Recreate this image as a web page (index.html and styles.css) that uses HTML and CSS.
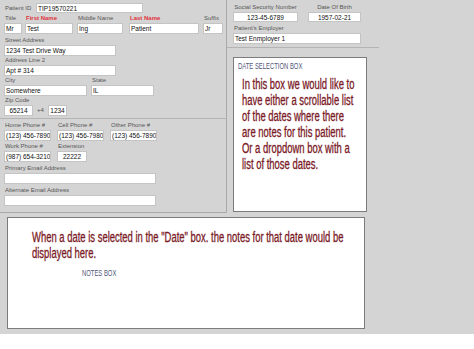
FILE: index.html
```html
<!DOCTYPE html>
<html>
<head>
<meta charset="utf-8">
<link rel="stylesheet" href="styles.css">
</head>
<body>
<div class="screen">
  <div class="top">
    <div class="left">
      <div class="row r1">
        <span class="lbl-inline">Patient ID</span>
        <div class="box w-pid">TIP19570221</div>
      </div>
      <div class="row r2">
        <div class="field f-title"><div class="lbl">Title</div><div class="box">Mr</div></div>
        <div class="field f-first"><div class="lbl req">First Name</div><div class="box">Test</div></div>
        <div class="field f-middle"><div class="lbl">Middle Name</div><div class="box">Ing</div></div>
        <div class="field f-last"><div class="lbl req">Last Name</div><div class="box">Patient</div></div>
        <div class="field f-suffix"><div class="lbl">Suffix</div><div class="box">Jr</div></div>
      </div>
      <div class="row r3">
        <div class="field f-street"><div class="lbl">Street Address</div><div class="box">1234 Test Drive Way</div></div>
      </div>
      <div class="row r4">
        <div class="field f-street"><div class="lbl">Address Line 2</div><div class="box">Apt # 314</div></div>
      </div>
      <div class="row r5">
        <div class="field f-city"><div class="lbl">City</div><div class="box">Somewhere</div></div>
        <div class="field f-state"><div class="lbl">State</div><div class="box">IL</div></div>
      </div>
      <div class="row r6">
        <div class="field f-zip"><div class="lbl">Zip Code</div><div class="box center">65214</div></div>
        <div class="plus4">+4</div>
        <div class="field f-zip4"><div class="lbl">&nbsp;</div><div class="box center">1234</div></div>
      </div>
      <div class="sep"></div>
      <div class="row r7">
        <div class="field f-phone"><div class="lbl">Home Phone #</div><div class="box">(123) 456-7890</div></div>
        <div class="field f-phone f-cell"><div class="lbl">Cell Phone #</div><div class="box">(123) 456-7980</div></div>
        <div class="field f-phone f-other"><div class="lbl">Other Phone #</div><div class="box">(123) 456-7890</div></div>
      </div>
      <div class="row r8">
        <div class="field f-phone"><div class="lbl">Work Phone #</div><div class="box">(987) 654-3210</div></div>
        <div class="field f-ext"><div class="lbl">Extension</div><div class="box center">22222</div></div>
      </div>
      <div class="row r9">
        <div class="field f-email"><div class="lbl">Primary Email Address</div><div class="box"></div></div>
      </div>
      <div class="row r10">
        <div class="field f-email"><div class="lbl">Alternate Email Address</div><div class="box"></div></div>
      </div>
    </div>
    <div class="right">
      <div class="upper">
        <div class="row rr1">
          <div class="field f-ssn"><div class="lbl center">Social Security Number</div><div class="box center">123-45-6789</div></div>
          <div class="field f-dob"><div class="lbl center">Date Of Birth</div><div class="box center">1957-02-21</div></div>
        </div>
        <div class="row rr2">
          <div class="field f-emp"><div class="lbl">Patient's Employer</div><div class="box">Test Enmployer 1</div></div>
        </div>
      </div>
      <div class="datebox">
        <div class="note-title">DATE SELECTION BOX</div>
        <div class="note-text">In this box we would like to<br>have either a scrollable list<br>of the dates where there<br>are notes for this patient.<br>Or a dropdown box with a<br>list of those dates.</div>
      </div>
    </div>
  </div>
  <div class="notes">
    <div class="note-text notes-text">When a date is selected in the "Date" box. the notes for that date would be<br>displayed here.</div>
    <div class="note-title notes-title">NOTES BOX</div>
  </div>
</div>
</body>
</html>
```

FILE: styles.css
```css
html, body {
  margin: 0;
  padding: 0;
  background: #ffffff;
}
body {
  font-family: "Liberation Sans", Arial, sans-serif;
  width: 474px;
  height: 349px;
  overflow: hidden;
}
.screen {
  background: #d4d4d4;
  height: 334px;
  display: flex;
  flex-direction: column;
}
.top {
  display: flex;
  height: 213px;
}
.left {
  width: 226px;
  height: 212px;
  border-right: 1px solid #a9a9a9;
  border-bottom: 1px solid #a9a9a9;
  box-sizing: content-box;
  display: flex;
  flex-direction: column;
}
.row {
  display: flex;
  align-items: flex-end;
  padding-left: 4px;
}
.field {
  display: flex;
  flex-direction: column;
}
.lbl, .lbl-inline {
  font-size: 6px;
  line-height: 9px;
  height: 9px;
  color: #555555;
  padding-left: 1px;
  white-space: nowrap;
}
.lbl.req {
  color: #e0323c;
  font-weight: bold;
}
.lbl.center { text-align: center; padding-left: 0; }
.box {
  background: #ffffff;
  border: 1px solid #c4c4c4;
  box-sizing: border-box;
  height: 11px;
  font-size: 6.5px;
  line-height: 9px;
  color: #111111;
  padding-left: 1px;
  white-space: nowrap;
  overflow: hidden;
}
.box.center { text-align: center; padding-left: 0; }

.r1 { margin-top: 3px; align-items: center; }
.r1 .lbl-inline { width: 30px; line-height: 10px; height: 10px; }
.w-pid { width: 107px; height: 10px; margin-left: 1px; }

.r2 { margin-top: 1px; }
.f-title { width: 18px; }
.f-first { width: 48px; margin-left: 3px; }
.f-middle { width: 46px; margin-left: 4px; }
.f-last { width: 70px; margin-left: 6px; }
.f-suffix { width: 20px; margin-left: 4px; }

.r3 { margin-top: 2px; }
.f-street { width: 112px; }
.f-city { width: 83px; }
.f-state { width: 63px; margin-left: 4px; }
.f-zip { width: 29px; }
.plus4 {
  font-size: 6px;
  color: #555555;
  width: 15px;
  line-height: 11px;
  padding-left: 4px;
  box-sizing: border-box;
}
.f-zip4 { width: 19px; }

.sep {
  height: 1px;
  background: #b4b4b4;
  margin-top: 2px;
}
.r7 { margin-top: 2px; }
.f-phone { width: 47px; }
.f-cell, .f-other { margin-left: 6px; }
.r8 { margin-top: 1px; }
.f-ext { width: 30px; margin-left: 6px; }
.r9, .r10 { margin-top: 2px; }
.f-email { width: 152px; }

.right {
  display: flex;
  flex-direction: column;
  flex: 1;
}
.upper {
  width: 152px;
  height: 47px;
  border-bottom: 1px solid #b4b4b4;
  display: flex;
  flex-direction: column;
}
.right .row { padding-left: 6px; }
.rr1 { margin-top: 3px; }
.f-ssn { width: 65px; }
.f-dob { width: 53px; margin-left: 10px; }
.rr1 .box { height: 10px; }
.rr2 { margin-top: 2px; }
.f-emp { width: 128px; }

.datebox {
  margin-top: 9px;
  margin-left: 6px;
  width: 134px;
  height: 155px;
  box-sizing: border-box;
  background: #ffffff;
  border: 1px solid #7c7c7c;
  padding: 2px 0 0 4px;
  overflow: hidden;
}
.note-title {
  font-family: "Liberation Sans", Arial, sans-serif;
  font-size: 9.5px;
  line-height: 11px;
  color: #505878;
  white-space: nowrap;
  transform: scaleX(0.62);
  transform-origin: 0 0;
}
.note-text {
  margin: 5px 0 0 4px;
  font-family: "Liberation Sans", Arial, sans-serif;
  font-size: 14px;
  line-height: 16px;
  color: #7a1a26;
  -webkit-text-stroke: 0.3px #7a1a26;
  white-space: nowrap;
  transform: scaleX(0.675);
  transform-origin: 0 0;
}
.notes {
  margin-top: 4px;
  margin-left: 7px;
  width: 358px;
  height: 112px;
  box-sizing: border-box;
  background: #ffffff;
  border: 1px solid #7c7c7c;
  padding: 11px 0 0 24px;
  overflow: hidden;
}
.notes-text {
  margin: 0;
}
.notes-title {
  margin-top: 6px;
  margin-left: 50px;
}
```
